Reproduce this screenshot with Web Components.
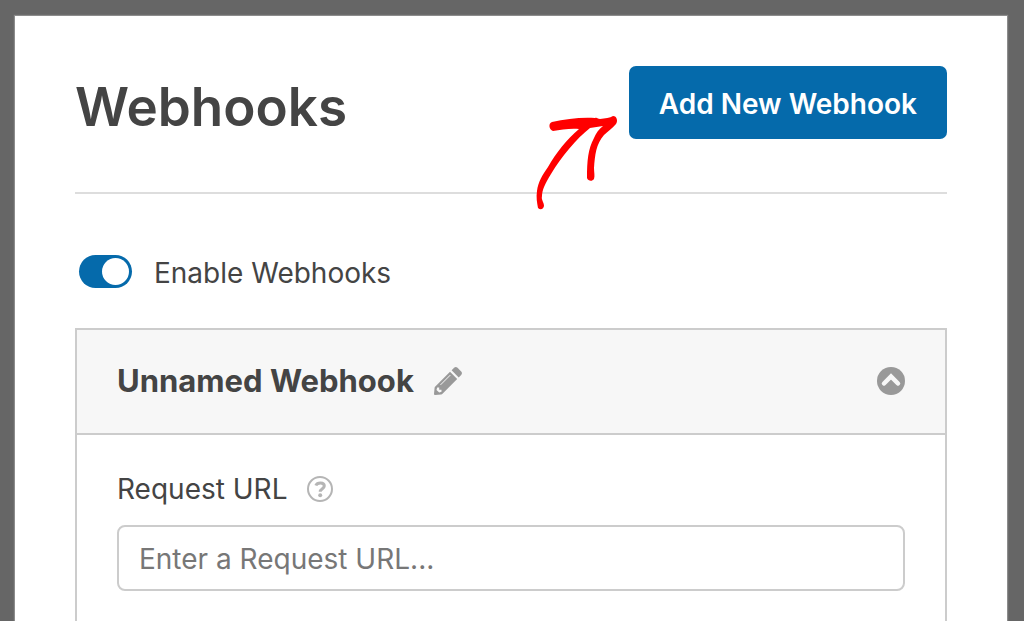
<!DOCTYPE html>
<html lang="en">
<head>
<meta charset="utf-8">
<meta name="viewport" content="width=device-width, initial-scale=1">
<title>Webhooks</title>
<style>
  html { height: 100%; }
  body {
    margin: 0;
    min-height: 100%;
    display: flex;
    background: #666;
    color: #444;
    font-family: Inter, "Liberation Sans", sans-serif;
    font-size: 28px;
    line-height: 36px;
    --blue: #056aab;
    --line: #ccc;
    --icon: #999;
  }
</style>
</head>
<body>
<settings-panel>
  <panel-header slot="header" heading="Webhooks">
    <action-button>Add New Webhook</action-button>
  </panel-header>
  <toggle-switch>Enable Webhooks</toggle-switch>
  <webhook-card name="Unnamed Webhook">
    <url-field label="Request URL" placeholder="Enter a Request URL..."></url-field>
  </webhook-card>
</settings-panel>
<script>
  const define = (tag, render) => customElements.define(tag, class extends HTMLElement {
    constructor() {
      super();
      this.attachShadow({ mode: 'open' });
    }
    connectedCallback() {
      this.shadowRoot.innerHTML = render(this);
    }
  });

  define('settings-panel', () => `
    <style>
      :host {
        display: flex; flex: 1; min-width: 0; box-sizing: border-box;
        margin: 16px 17px 0 15px; padding: 50px 60px 0;
        background: #fff; box-shadow: 0 0 1px 1px #8c8c8c;
      }
      main { flex: 1; min-width: 0; display: flex; flex-direction: column; }
    </style>
    <main><slot name="header"></slot><slot></slot></main>`);

  define('panel-header', el => `
    <style>
      :host { display: block; border-bottom: 2px solid #ddd; padding-bottom: 53px; }
      header { position: relative; display: flex; justify-content: space-between; align-items: center; }
      h1 { margin: 0; padding-top: 8px; font-size: 53px; line-height: 64px; font-weight: 600; }
      .arrow { position: absolute; right: 328px; top: 46px; width: 84px; height: 102px; }
    </style>
    <header>
      <h1>${el.getAttribute('heading')}</h1>
      <slot></slot>
      <svg class="arrow" viewBox="535 112 84 102" aria-hidden="true">
        <g fill="#f00">
          <path d="M553 131 C549 130 548 123 552 122 C566 119 581 117 595 118 C597 117 598 119 600 119 C605 118 610 118 613 116 C617 116 618 121 616 124 C613 128 608 131 604 135 C596 144 595 155 594 168 C594 172 595 176 594 179 C592 182 588 181 587 178 C587 161 588 149 594 138 C596 133 599 129 603 126 L590 128 C576 139 562 156 551 174 C545 184 542 190 542 196 C541 200 544 202 544 206 C543 210 540 210 538 208 C537 203 536 197 537 191 C538 182 543 174 548 167 C556 153 567 139 579 129 C570 128 561 130 553 131Z"/>
        </g>
      </svg>
    </header>`);

  define('action-button', () => `
    <style>
      :host { display: block; }
      button {
        display: block; border: 0; border-radius: 7px; padding: 20px 30px 16px; cursor: pointer;
        background: var(--blue); color: #fff;
        font: 600 28px/37px Inter, "Liberation Sans", sans-serif;
      }
    </style>
    <button type="button"><slot></slot></button>`);

  define('toggle-switch', () => `
    <style>
      :host { display: flex; align-items: center; margin: 59px 4px 39px; }
      input {
        appearance: none; flex: none; box-sizing: border-box; width: 53px; height: 33px;
        margin: 0; padding: 3px; border-radius: 17px; background: #999;
        display: flex; justify-content: flex-start; cursor: pointer;
      }
      input::before { content: ""; width: 27px; height: 27px; border-radius: 50%; background: #fff; }
      input:checked { background: var(--blue); justify-content: flex-end; }
      label { padding: 2px 0 0 22px; margin-bottom: -2px; }
    </style>
    <input type="checkbox" role="switch" id="toggle" checked>
    <label for="toggle"><slot></slot></label>`);

  define('webhook-card', el => `
    <style>
      :host { display: block; flex: 1; border: 2px solid var(--line); border-bottom: 0; }
      header {
        display: flex; align-items: center; gap: 20px; padding: 31px 40px 33px;
        background: #f7f7f7; border-bottom: 2px solid var(--line);
      }
      h2 { margin: 0; font-size: 31px; line-height: 39px; font-weight: 700; }
      button { border: 0; padding: 0; background: none; color: var(--icon); cursor: pointer; display: block; }
      .collapse { margin-left: auto; }
      svg { display: block; width: 28px; height: 28px; }
      section { padding: 36px 40px; }
    </style>
    <header>
      <h2>${el.getAttribute('name')}</h2>
      <button type="button" aria-label="Rename webhook">
        <svg viewBox="0 0 28 28">
          <path fill="currentColor" d="M16 4.800 23.200 12 8.500 26.700Q8 27.300 7.200 27.400L1 28Q0 28 0 27L.6 20.800Q.7 20 1.300 19.500Z"/>
          <path fill="currentColor" d="M17.600 3.300 20.100.8Q21.800-.7 23.500.8L27.200 4.500Q28.700 6.200 27.200 7.900L24.700 10.400Z"/>
          <path stroke="#f7f7f7" stroke-width="1" d="M6.500 17.900 16.300 8.100"/>
          <path fill="#f7f7f7" d="M3.200 20.500H5.200V22.800H7.500V24.800L5.200 25.600 2.500 22.900Z"/>
        </svg>
      </button>
      <button type="button" class="collapse" aria-label="Collapse webhook" aria-expanded="true">
        <svg viewBox="0 0 28 28">
          <circle cx="14" cy="14" r="14" fill="currentColor"/>
          <path d="M7 16.500 14 9.500 21 16.500" fill="none" stroke="#f7f7f7" stroke-width="4.500" stroke-linecap="round"/>
        </svg>
      </button>
    </header>
    <section><slot></slot></section>`);

  define('url-field', el => `
    <style>
      :host { display: block; }
      .caption { display: flex; align-items: center; gap: 20px; margin-bottom: 18px; }
      svg { display: block; width: 26px; height: 26px; }
      input {
        display: block; box-sizing: border-box; width: 100%; height: 66px;
        padding: 2px 20px 0; border: 2px solid var(--line); border-radius: 8px;
        background: #fff; color: #444;
        font: 400 28px/36px Inter, "Liberation Sans", sans-serif;
      }
      input::placeholder { color: #777; opacity: 1; }
    </style>
    <div class="caption">
      <label for="url">${el.getAttribute('label')}</label>
      <svg viewBox="0 0 26 26" role="img" aria-label="Help">
        <circle cx="13" cy="13" r="12" fill="none" stroke="#b5b5b5" stroke-width="2"/>
        <path d="M8.800 9.500C10.200 6.200 17.300 5.800 17.300 10 C17.300 12.800 13.200 12.500 13.200 15.800" fill="none" stroke="#b5b5b5" stroke-width="3"/>
        <circle cx="13.200" cy="19.300" r="2" fill="#b5b5b5"/>
      </svg>
    </div>
    <input type="url" id="url" placeholder="${el.getAttribute('placeholder')}">`);
</script>
</body>
</html>
